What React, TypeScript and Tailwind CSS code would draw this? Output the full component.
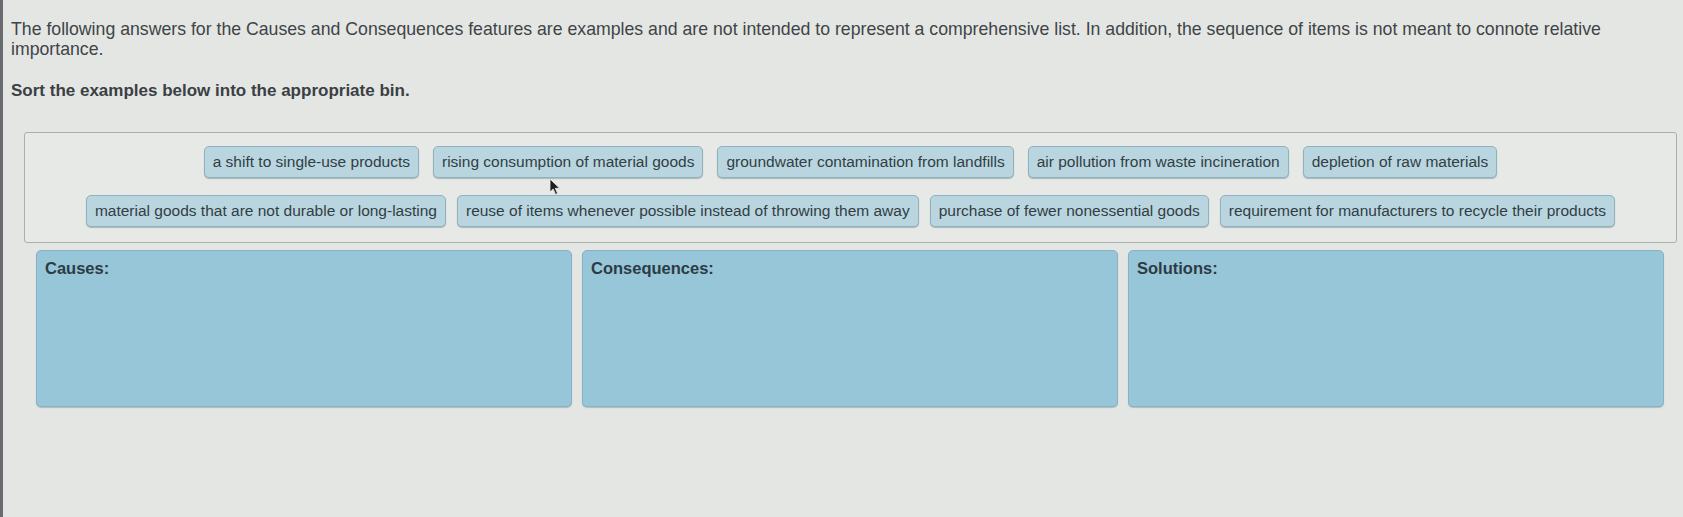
import React from "react";

const rowOne = [
  "a shift to single-use products",
  "rising consumption of material goods",
  "groundwater contamination from landfills",
  "air pollution from waste incineration",
  "depletion of raw materials",
];

const rowTwo = [
  "material goods that are not durable or long-lasting",
  "reuse of items whenever possible instead of throwing them away",
  "purchase of fewer nonessential goods",
  "requirement for manufacturers to recycle their products",
];

const bins = ["Causes:", "Consequences:", "Solutions:"];

function Chip({ label }: { label: string }) {
  return (
    <div className="rounded-[5px] border border-[#90b2bf] bg-[#b9d6e0] px-[8px] py-[5px] text-[15.5px] leading-[20px] text-[#333d43] shadow-[0_1px_1px_rgba(60,90,100,0.35)] whitespace-nowrap">
      {label}
    </div>
  );
}

function Cursor() {
  return (
    <svg
      className="absolute left-[546px] top-[178px]"
      width="12"
      height="18"
      viewBox="0 0 12 18"
    >
      <path
        d="M1 1 L1 14 L4.2 11 L6.6 16.5 L8.6 15.6 L6.3 10.3 L10.6 10.3 Z"
        fill="#1d2022"
        stroke="#e9ebe8"
        strokeWidth="0.8"
        strokeLinejoin="round"
      />
    </svg>
  );
}

export default function App() {
  return (
    <div className="relative min-h-[517px] w-full overflow-hidden border-l-[3px] border-[#686c6e] bg-[#e4e6e3] font-['Liberation_Sans',Arial,sans-serif] text-[#3e4448]">
      <div className="pl-[8px] pr-[50px] pt-[19px]">
        <p className="text-[17.7px] leading-[20px]">
          The following answers for the Causes and Consequences features are
          examples and are not intended to represent a comprehensive list. In
          addition, the sequence of items is not meant to connote relative
          importance.
        </p>
        <p className="mt-[22px] text-[17px] font-bold leading-[20px] text-[#3a4044]">
          Sort the examples below into the appropriate bin.
        </p>
      </div>

      <div className="ml-[21px] mr-[6px] mt-[31px] flex flex-col items-center gap-[17px] rounded-[3px] border border-[#a9aeae] bg-[#e7e9e6] pb-[15px] pt-[13px]">
        <div className="flex gap-x-[14px]">
          {rowOne.map((t) => (
            <Chip key={t} label={t} />
          ))}
        </div>
        <div className="flex gap-x-[11px]">
          {rowTwo.map((t) => (
            <Chip key={t} label={t} />
          ))}
        </div>
      </div>

      <div className="ml-[33px] mr-[19px] mt-[7px] grid grid-cols-3 gap-[10px]">
        {bins.map((b) => (
          <div
            key={b}
            className="h-[157px] rounded-[5px] border border-[#84b3c6] bg-[#98c6d9] px-[8px] pt-[6px] shadow-[0_1px_1px_rgba(60,90,100,0.3)]"
          >
            <span className="text-[16.5px] font-bold leading-[20px] text-[#2c3b45]">
              {b}
            </span>
          </div>
        ))}
      </div>

      <Cursor />
    </div>
  );
}
